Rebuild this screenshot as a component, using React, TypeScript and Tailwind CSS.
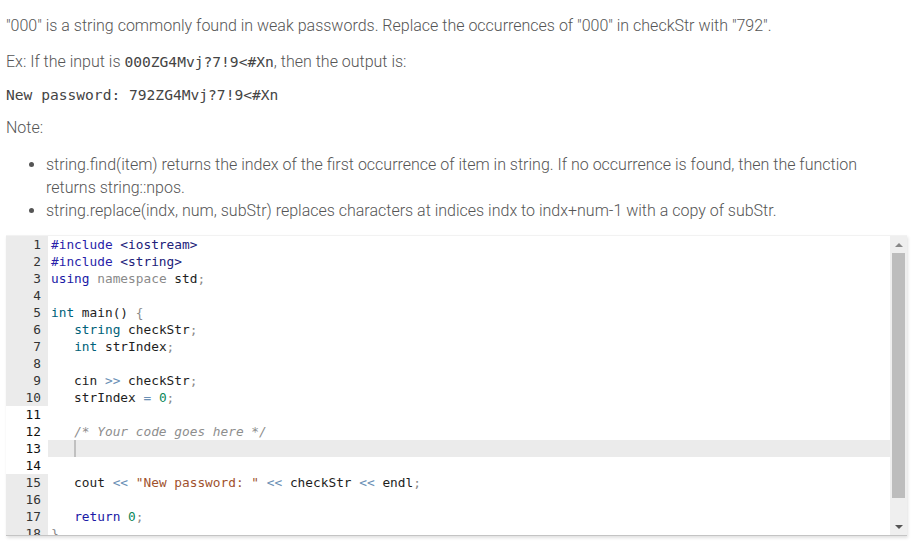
import React from "react";

type Tok = [string, string];

const C = {
  meta: "text-[#2a1faa]",
  plain: "text-[#1e1e1e]",
  kw: "text-[#1a1aa6]",
  gray: "text-[#8a8a8a]",
  type: "text-[#00627a]",
  num: "text-[#098658]",
  com: "text-[#8e8e8e] italic",
  str: "text-[#a0522d]",
  op: "text-[#6a8fb5]",
};

const lines: Tok[][] = [
  [["#include ", C.meta], ["<iostream>", "text-[#21217a]"]],
  [["#include ", C.meta], ["<string>", "text-[#21217a]"]],
  [["using", C.kw], [" ", C.plain], ["namespace", C.gray], [" std", C.plain], [";", C.gray]],
  [],
  [["int", C.type], [" main() ", C.plain], ["{", C.gray]],
  [["   ", C.plain], ["string", C.type], [" checkStr", C.plain], [";", C.gray]],
  [["   ", C.plain], ["int", C.type], [" strIndex", C.plain], [";", C.gray]],
  [],
  [["   cin ", C.plain], [">>", C.op], [" checkStr", C.plain], [";", C.gray]],
  [["   strIndex ", C.plain], ["=", C.op], [" ", C.plain], ["0", C.num], [";", C.gray]],
  [],
  [["   ", C.plain], ["/* Your code goes here */", C.com]],
  [],
  [],
  [["   cout ", C.plain], ["<<", C.op], [" ", C.plain], ["\"New password: \"", C.str], [" ", C.plain], ["<<", C.op], [" checkStr ", C.plain], ["<<", C.op], [" endl", C.plain], [";", C.gray]],
  [],
  [["   ", C.plain], ["return", C.kw], [" ", C.plain], ["0", C.num], [";", C.gray]],
  [["}", C.gray]],
];

export default function App() {
  const mono = { fontFamily: '"DejaVu Sans Mono", "Liberation Mono", monospace' };
  return (
    <div
      className="w-[921px] h-[553px] bg-white overflow-hidden text-[#555] font-light text-[16px]"
      style={{ fontFamily: "Roboto, 'Noto Sans', sans-serif" }}
    >
      <div className="pl-[6px] pt-[15px]">
        <p className="leading-[22px]">"000" is a string commonly found in weak passwords. Replace the occurrences of "000" in checkStr with "792".</p>
        <p className="leading-[22px] mt-[14px]">
          Ex: If the input is{" "}
          <span className="text-[14.6px] font-normal text-[#444]" style={mono}>000ZG4Mvj?7!9&lt;#Xn</span>, then the output is:
        </p>
        <pre className="leading-[20px] mt-[12px] text-[14.6px] font-normal text-[#444]" style={mono}>New password: 792ZG4Mvj?7!9&lt;#Xn</pre>
        <p className="leading-[22px] mt-[12px]">Note:</p>
        <ul className="mt-[14px] pl-[40px] list-disc leading-[23px] pr-[40px]">
          <li>string.find(item) returns the index of the first occurrence of item in string. If no occurrence is found, then the function returns string::npos.</li>
          <li>string.replace(indx, num, subStr) replaces characters at indices indx to indx+num-1 with a copy of subStr.</li>
        </ul>
      </div>

      <div className="mt-[13px] ml-[6px] w-[901px] h-[301px] relative border-t border-[#f2f2f2] border-b border-b-[#c4c4c4] shadow-[1px_2px_3px_rgba(0,0,0,0.12)] overflow-hidden flex">
        <div className="w-[42px] shrink-0 flex flex-col text-[12.8px] leading-[17px] font-normal" style={mono}>
          {lines.map((_, i) => {
            const n = i + 1;
            const white = n >= 11 && n <= 14;
            return (
              <div
                key={i}
                className={`h-[17px] shrink-0 text-right pr-[7px] ${white ? "bg-white text-[#111]" : "bg-[#ebebeb] text-[#333]"}`}
              >
                {n}
              </div>
            );
          })}
        </div>
        <div className="flex-1 flex flex-col text-[12.8px] leading-[17px] font-normal pl-[3px]" style={mono}>
          {lines.map((toks, i) => (
            <div
              key={i}
              className={`h-[17px] shrink-0 whitespace-pre relative ${i === 12 ? "bg-[#ebebeb] -ml-[3px] pl-[3px]" : ""}`}
            >
              {i === 12 && <span className="absolute left-[26px] top-0 w-[2px] h-[17px] bg-[#c0c0c0]" />}
              {toks.map(([t, c], j) => (
                <span key={j} className={c}>{t}</span>
              ))}
            </div>
          ))}
        </div>
        <div className="w-[17px] shrink-0 bg-[#efefef] flex flex-col items-center">
          <div className="h-[17px] w-full flex items-center justify-center shrink-0">
            <div className="w-0 h-0 border-l-[4px] border-r-[4px] border-b-[4px] border-l-transparent border-r-transparent border-b-[#888]" />
          </div>
          <div className="w-[13px] h-[245px] bg-[#bdbdbd] shrink-0" />
          <div className="flex-1" />
          <div className="h-[17px] w-full flex items-center justify-center shrink-0">
            <div className="w-0 h-0 border-l-[4px] border-r-[4px] border-t-[4px] border-l-transparent border-r-transparent border-t-[#555]" />
          </div>
        </div>
      </div>
    </div>
  );
}
